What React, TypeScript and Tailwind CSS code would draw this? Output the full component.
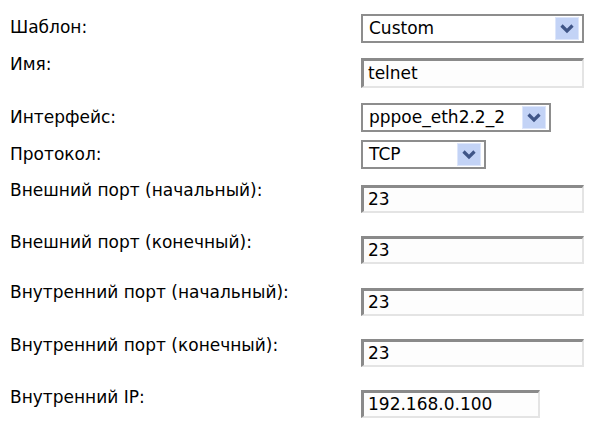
const font = { fontFamily: '"DejaVu Sans", Verdana, sans-serif' }

function Chevron() {
  return (
    <span className="ml-auto mr-[3px] flex h-[23px] w-[24px] shrink-0 items-center justify-center border border-[#dde6fb] bg-[#c3d3f6]">
      <svg width="14" height="10" viewBox="0 0 14 10">
        <path d="M1.5 1.5 L7 7 L12.5 1.5" fill="none" stroke="#3f5587" strokeWidth="3.2" />
      </svg>
    </span>
  )
}

function Select({ value, width }: { value: string; width: string }) {
  return (
    <div className={`flex h-[29px] items-center border-2 border-[#8d8d8d] bg-white ${width}`}>
      <span className="pl-[6px] text-[17px] leading-none text-black">{value}</span>
      <Chevron />
    </div>
  )
}

function Field({ value, width = "w-[223px]", h = "h-[29px]" }: { value: string; width?: string; h?: string }) {
  return (
    <div
      className={`flex items-center border-t-[3px] border-l-[3px] border-r-2 border-b-2 border-t-[#8a8a8a] border-l-[#8a8a8a] border-r-[#e4e4e4] border-b-[#e4e4e4] bg-[#fdfdfd] ${width} ${h}`}
    >
      <span className="pl-[4px] text-[17px] leading-none text-black">{value}</span>
    </div>
  )
}

function Label({ children, className = "" }: { children: string; className?: string }) {
  return <div className={`w-[351px] shrink-0 text-[17px] leading-[22px] text-black ${className}`}>{children}</div>
}

export default function App() {
  return (
    <div className="h-[432px] w-[600px] overflow-hidden bg-white pl-[10px]" style={font}>
      <div className="flex items-start pt-[14px]">
        <Label className="mt-[2px]">Шаблон:</Label>
        <Select value="Custom" width="w-[223px]" />
      </div>
      <div className="mt-[10px] flex items-start">
        <Label>Имя:</Label>
        <div className="mt-[5px]">
          <Field value="telnet" h="h-[30px]" />
        </div>
      </div>
      <div className="mt-[15px] flex items-start">
        <Label className="mt-[3px]">Интерфейс:</Label>
        <Select value="pppoe_eth2.2_2" width="w-[190px]" />
      </div>
      <div className="mt-[8px] flex items-start">
        <Label className="mt-[3px]">Протокол:</Label>
        <Select value="TCP" width="w-[125px]" />
      </div>
      <div className="mt-[10px] flex items-start">
        <Label>Внешний порт (начальный):</Label>
        <div className="mt-[6px]">
          <Field value="23" h="h-[28px]" />
        </div>
      </div>
      <div className="mt-[18px] flex items-start">
        <Label>Внешний порт (конечный):</Label>
        <div className="mt-[5px]">
          <Field value="23" h="h-[28px]" />
        </div>
      </div>
      <div className="mt-[17px] flex items-start">
        <Label>Внутренний порт (начальный):</Label>
        <div className="mt-[7px]">
          <Field value="23" h="h-[28px]" />
        </div>
      </div>
      <div className="mt-[18px] flex items-start">
        <Label>Внутренний порт (конечный):</Label>
        <div className="mt-[5px]">
          <Field value="23" h="h-[28px]" />
        </div>
      </div>
      <div className="mt-[19px] flex items-start">
        <Label>Внутренний IP:</Label>
        <div className="mt-[4px]">
          <Field value="192.168.0.100" width="w-[179px]" h="h-[28px]" />
        </div>
      </div>
    </div>
  )
}
